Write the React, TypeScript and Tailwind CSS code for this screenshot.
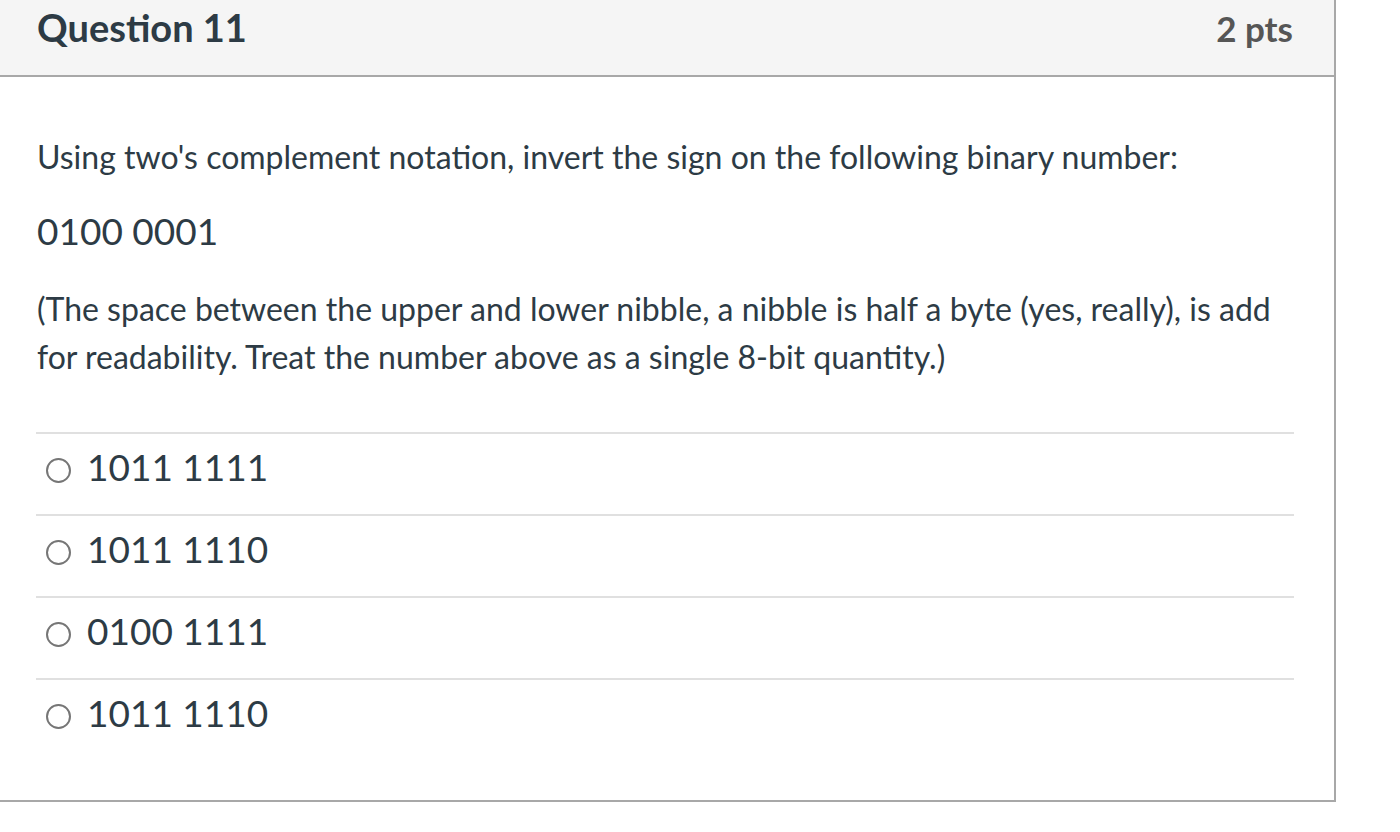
const answers = ['1011 1111', '1011 1110', '0100 1111', '1011 1110'];

function Radio() {
  return (
    <span className="block w-[25px] h-[25px] mt-[10px] rounded-full border-2 border-[#767676] bg-white shrink-0" />
  );
}

export default function App() {
  return (
    <div className="min-h-[832px] bg-white font-['Lato','Noto_Sans',sans-serif] text-[#2d3b45]">
      <div className="w-[1336px] border-r-2 border-b-2 border-[#a8a8a8]">
        {/* Question header */}
        <div className="h-[77px] bg-[#f5f5f5] border-b-2 border-[#a8a8a8] flex items-start justify-between pl-[37px] pr-[41px] pt-[8px]">
          <h2 className="text-[38px] leading-[38px] font-bold">Question 11</h2>
          <div className="text-[35px] leading-[38px] font-bold text-[#565656] pt-[1px]">2 pts</div>
        </div>

        {/* Question body */}
        <div className="px-[36px] pt-[56px] pb-[40px]">
          <div className="pl-[1px]">
            <p className="text-[32px] leading-[48px]">
              Using two's complement notation, invert the sign on the following binary number:
            </p>
            <p className="mt-[26px] text-[37px] leading-[48px]">0100 0001</p>
            <p className="mt-[30px] text-[32px] leading-[48px]">
              (The space between the upper and lower nibble, a nibble is half a byte (yes, really), is add
              for readability. Treat the number above as a single 8-bit quantity.)
            </p>
          </div>

          <div className="mt-[51px] w-[1258px]">
            {answers.map((a, i) => (
              <label
                key={i}
                className="flex items-start h-[82px] border-t-2 border-[#e0e0e0] pl-[10px] pt-[14px]"
              >
                <Radio />
                <span className="ml-[16px] text-[37px] leading-[37px]">{a}</span>
              </label>
            ))}
          </div>
        </div>
      </div>
    </div>
  );
}
